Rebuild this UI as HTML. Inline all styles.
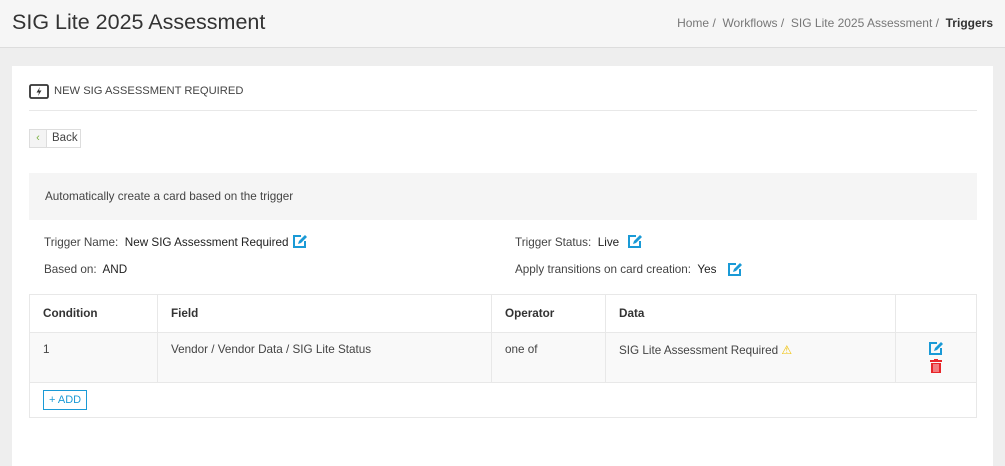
<!DOCTYPE html>
<html><head><style>
*{box-sizing:border-box;margin:0;padding:0}
body{width:1005px;height:446px;overflow:hidden;background:#eeeeee;font-family:"Liberation Sans",sans-serif;color:#333;position:relative}
.top{position:absolute;left:0;top:0;width:1005px;height:48px;background:#f6f6f6;border-bottom:1px solid #ddd}
.top h1{position:absolute;left:12px;top:10px;font-size:21.5px;font-weight:normal;color:#333}
.bc{position:absolute;right:12px;top:16px;font-size:12px;color:#777}
.bc b{color:#333;font-weight:bold}
.card{position:absolute;left:12px;top:66px;width:981px;height:400px;background:#fff}
.abs{position:absolute}
.t{font-size:11.7px;color:#444;white-space:nowrap}
.t b{font-weight:normal;color:#222}
table{position:absolute;left:17px;top:228px;width:948px;border-collapse:collapse;font-size:11.7px;color:#444}
td,th{border:1px solid #e8e8e8;text-align:left;padding:0 13px;vertical-align:top}
th{height:38px;vertical-align:middle;font-weight:bold;color:#333}
</style></head><body>
<div class="top"><h1>SIG Lite 2025 Assessment</h1>
<div class="bc">Home /&nbsp;&nbsp;Workflows /&nbsp;&nbsp;SIG Lite 2025 Assessment /&nbsp;&nbsp;<b>Triggers</b></div></div>
<div class="card">
<svg class="abs" style="left:17px;top:18px" width="20" height="16" viewBox="0 0 20 16"><rect x="1" y="1" width="18" height="13" rx="1.5" fill="none" stroke="#333" stroke-width="1.8"/><path d="M11 3 L7.5 8.5 H10 L9 12 L12.5 6.5 H10 Z" fill="#333"/></svg>
<div class="abs t" style="left:42px;top:19px;font-size:11.2px;color:#444">NEW SIG ASSESSMENT REQUIRED</div>
<div class="abs" style="left:17px;top:44px;width:948px;height:1px;background:#e8e8e8"></div>
<div class="abs" style="left:17px;top:63px;width:52px;height:19px;border:1px solid #ddd;background:#fff"><div class="abs" style="left:0;top:0;width:17px;height:17px;background:#f4f4f4;border-right:1px solid #ddd;color:#7cb342;font-size:11px;text-align:center;line-height:16px">‹</div><div class="abs t" style="left:22px;top:2px;font-size:11.5px">Back</div></div>
<div class="abs" style="left:17px;top:107px;width:948px;height:47px;background:#f5f5f5"></div>
<div class="abs t" style="left:33px;top:124px">Automatically create a card based on the trigger</div>
<div class="abs t" style="left:32px;top:170px">Trigger Name:&nbsp; <b>New SIG Assessment Required</b></div>
<div class="abs t" style="left:32px;top:197px">Based on:&nbsp; <b>AND</b></div>
<div class="abs t" style="left:503px;top:170px">Trigger Status:&nbsp; <b>Live</b></div>
<div class="abs t" style="left:503px;top:197px">Apply transitions on card creation:&nbsp; <b>Yes</b></div>
<svg class="abs" style="left:280px;top:168px" width="16" height="15" viewBox="0 0 16 15"><path d="M9 2H2v11h11V7" fill="none" stroke="#1a9ad6" stroke-width="2"/><path d="M6 10l1-3 6-6 2 2-6 6z" fill="#1a9ad6"/></svg>
<svg class="abs" style="left:615px;top:168px" width="16" height="15" viewBox="0 0 16 15"><path d="M9 2H2v11h11V7" fill="none" stroke="#1a9ad6" stroke-width="2"/><path d="M6 10l1-3 6-6 2 2-6 6z" fill="#1a9ad6"/></svg>
<svg class="abs" style="left:715px;top:196px" width="16" height="15" viewBox="0 0 16 15"><path d="M9 2H2v11h11V7" fill="none" stroke="#1a9ad6" stroke-width="2"/><path d="M6 10l1-3 6-6 2 2-6 6z" fill="#1a9ad6"/></svg>
<table>
<tr><th style="width:128px">Condition</th><th style="width:334px">Field</th><th style="width:114px">Operator</th><th style="width:290px">Data</th><th></th></tr>
<tr style="background:#f9f9f9;height:50px"><td style="padding-top:10px">1</td><td style="padding-top:10px">Vendor / Vendor Data / SIG Lite Status</td><td style="padding-top:10px">one of</td><td style="padding-top:10px">SIG Lite Assessment Required <span style="color:#f0c000;font-size:12px">⚠</span></td><td style="text-align:center;padding-top:8px">
<svg width="16" height="15" viewBox="0 0 16 15"><path d="M9 2H2v11h11V7" fill="none" stroke="#1a9ad6" stroke-width="2"/><path d="M6 10l1-3 6-6 2 2-6 6z" fill="#1a9ad6"/></svg><br>
<svg width="12" height="14" viewBox="0 0 12 14"><rect x="0" y="1" width="12" height="2" fill="#e8262a"/><rect x="4" y="0" width="4" height="2" fill="#e8262a"/><path d="M1 4h10v10H1z" fill="#e8262a"/><path d="M4 5v8M6 5v8M8 5v8" stroke="#fff" stroke-width="0.8"/></svg></td></tr>
<tr style="height:35px"><td colspan="5" style="vertical-align:middle"><span style="display:inline-block;border:1px solid #1a9ad6;color:#1a9ad6;font-size:11px;padding:3px 5px">+ ADD</span></td></tr>
</table>
</div>
</body></html>
